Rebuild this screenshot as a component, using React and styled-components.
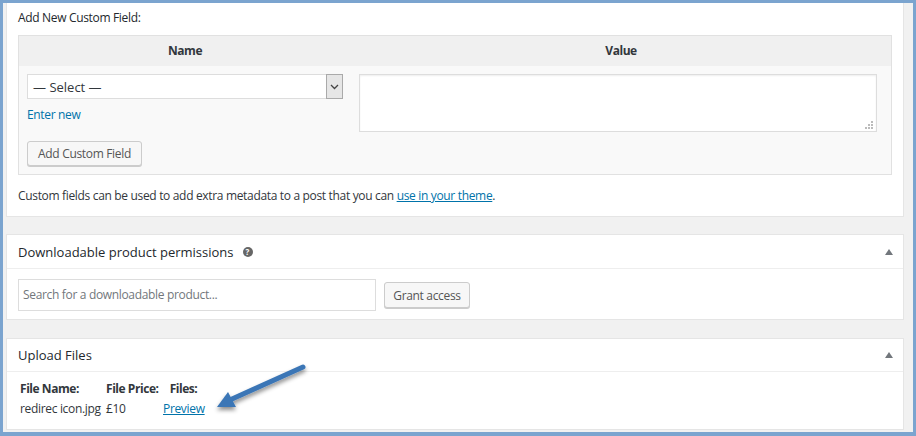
import React from 'react'
import styled, { createGlobalStyle } from 'styled-components'

const GlobalStyle = createGlobalStyle`
  html, body { margin: 0; padding: 0; background: #fff; }
  * { box-sizing: border-box; }
  body { font-family: "Open Sans", "Noto Sans", "Liberation Sans", sans-serif; font-size: 12px; letter-spacing: -0.33px; color: #32373c; }
`

const Frame = styled.div`
  position: relative;
  width: 916px;
  height: 436px;
  border: 3px solid #7ba4cf;
  border-bottom-width: 4px;
  background: #f1f1f1;
  padding: 0 9px 0 3px;
  overflow: hidden;
`

const Panel = styled.section`
  background: #fff;
  border: 1px solid #e5e5e5;
  border-top-width: ${(p) => (p.$flat ? 0 : '1px')};
  margin-bottom: ${(p) => p.$gap || 0}px;
  height: ${(p) => p.$h}px;
`

const PanelHead = styled.div`
  display: flex;
  align-items: center;
  height: ${(p) => p.$h}px;
  padding: 0 10px 0 11px;
  border-bottom: 1px solid #eee;
  font-size: 13px;
  letter-spacing: 0;
  color: #23282d;
`

const Toggle = styled.span`
  margin-left: auto;
  width: 0;
  height: 0;
  border-left: 4px solid transparent;
  border-right: 4px solid transparent;
  border-bottom: 6px solid #72777c;
`

const Help = styled.span`
  display: inline-flex;
  align-items: center;
  justify-content: center;
  width: 10px;
  height: 10px;
  margin-left: 9px;
  border-radius: 50%;
  background: #666;
  color: #fff;
  font-size: 8px;
  font-weight: 700;
  line-height: 1;
`

const FirstBody = styled.div`
  padding: 7px 11px 0;
`

const Heading = styled.div`
  height: 25px;
  color: #23282d;
  line-height: 16px;
`

const FieldTable = styled.div`
  border: 1px solid #e1e1e1;
  background: #f9f9f9;
  height: 140px;
`

const FieldHead = styled.div`
  display: grid;
  grid-template-columns: 332px 1fr;
  height: 30px;
  background: #f0f0f0;
  font-weight: 700;
  letter-spacing: -0.45px;
  color: #32373c;
  line-height: 30px;
  text-align: center;
`

const FieldBody = styled.div`
  display: grid;
  grid-template-columns: 316px 518px;
  column-gap: 16px;
  padding: 8px 8px 0;
`

const SelectBox = styled.div`
  display: flex;
  align-items: center;
  height: 25px;
  background: #fff;
  border: 1px solid #ddd;
  padding-left: 5px;
  color: #32373c;
  font-size: 13px;
  letter-spacing: 0;
`

const SelectArrow = styled.span`
  display: flex;
  align-items: center;
  justify-content: center;
  margin-left: auto;
  width: 17px;
  height: 25px;
  margin-right: -1px;
  background: #e6e6e6;
  border: 1px solid #aaa;
`

const EnterNew = styled.a`
  display: block;
  margin-top: 8px;
  color: #0073aa;
  line-height: 16px;
`

const Button = styled.button`
  height: ${(p) => p.$h}px;
  width: ${(p) => p.$w}px;
  padding: 0;
  font: inherit;
  letter-spacing: inherit;
  color: #555;
  background: #f7f7f7;
  border: 1px solid #ccc;
  border-radius: 3px;
  box-shadow: 0 1px 0 #ccc;
`

const AddButton = styled(Button)`
  display: block;
  margin-top: 18px;
`

const TextArea = styled.div`
  position: relative;
  height: 58px;
  background: #fff;
  border: 1px solid #ddd;
  box-shadow: inset 0 1px 2px rgba(0, 0, 0, 0.07);
`

const Grip = styled.svg`
  position: absolute;
  right: 3px;
  bottom: 2px;
`

const Note = styled.p`
  margin: 13px 0 0;
  line-height: 16px;
  color: #32373c;
  a { color: #0073aa; text-decoration: underline; }
`

const SearchRow = styled.div`
  display: flex;
  align-items: center;
  gap: 8px;
  padding: 10px 11px 0;
`

const SearchBox = styled.div`
  width: 358px;
  height: 32px;
  padding-left: 4px;
  border: 1px solid #ddd;
  background: #fff;
  color: #72777c;
  line-height: 30px;
`

const Files = styled.div`
  display: grid;
  grid-template-columns: 86px 57px 41px;
  justify-content: start;
  row-gap: 4px;
  padding: 9px 0 0 13px;
  line-height: 16px;
  color: #32373c;
`

const FileHead = styled.div`
  font-weight: 700;
  letter-spacing: -0.45px;
  white-space: nowrap;
  text-align: ${(p) => p.$align || 'left'};
`

const PreviewCell = styled.div`
  a { color: #0073aa; text-decoration: underline; }
`

const Arrow = styled.svg`
  position: absolute;
  left: 200px;
  top: 350px;
  overflow: visible;
`

export default function App() {
  return (
    <>
      <GlobalStyle />
      <Frame>
        <Panel $flat $h={214} $gap={17}>
          <FirstBody>
            <Heading>Add New Custom Field:</Heading>
            <FieldTable>
              <FieldHead>
                <div>Name</div>
                <div>Value</div>
              </FieldHead>
              <FieldBody>
                <div>
                  <SelectBox>
                    — Select —
                    <SelectArrow>
                      <svg width="9" height="6" viewBox="0 0 9 6">
                        <path d="M1 1l3.5 3.5L8 1" fill="none" stroke="#444" strokeWidth="1.3" />
                      </svg>
                    </SelectArrow>
                  </SelectBox>
                  <EnterNew>Enter new</EnterNew>
                  <AddButton $w={115} $h={25}>Add Custom Field</AddButton>
                </div>
                <TextArea>
                  <Grip width="8" height="8" viewBox="0 0 8 8">
                    <path d="M6 0h2v2H6zM3 3h2v2H3zM6 3h2v2H6zM0 6h2v2H0zM3 6h2v2H3zM6 6h2v2H6z" fill="#bbb" />
                  </Grip>
                </TextArea>
              </FieldBody>
            </FieldTable>
            <Note>
              Custom fields can be used to add extra metadata to a post that you can <a>use in your theme</a>.
            </Note>
          </FirstBody>
        </Panel>

        <Panel $h={86} $gap={18}>
          <PanelHead $h={34}>
            Downloadable product permissions
            <Help>?</Help>
            <Toggle />
          </PanelHead>
          <SearchRow>
            <SearchBox>Search for a downloadable product...</SearchBox>
            <Button $w={86} $h={26}>Grant access</Button>
          </SearchRow>
        </Panel>

        <Panel $h={92}>
          <PanelHead $h={33}>
            Upload Files
            <Toggle />
          </PanelHead>
          <Files>
            <FileHead>File Name:</FileHead>
            <FileHead>File Price:</FileHead>
            <FileHead $align="center">Files:</FileHead>
            <div>redirec icon.jpg</div>
            <div>£10</div>
            <PreviewCell><a>Preview</a></PreviewCell>
          </Files>
        </Panel>

        <Arrow width="100" height="60" viewBox="0 0 100 60">
          <defs>
            <filter id="arrowShadow" x="-20%" y="-20%" width="140%" height="160%">
              <feDropShadow dx="0" dy="3" stdDeviation="2" floodColor="#000" floodOpacity="0.45" />
            </filter>
          </defs>
          <g filter="url(#arrowShadow)">
            <path d="M100 14L29 46" stroke="#3b76b6" strokeWidth="5" strokeLinecap="round" fill="none" />
            <path d="M14 54L25 39L33 54Z" fill="#3b76b6" />
          </g>
        </Arrow>
      </Frame>
    </>
  )
}
